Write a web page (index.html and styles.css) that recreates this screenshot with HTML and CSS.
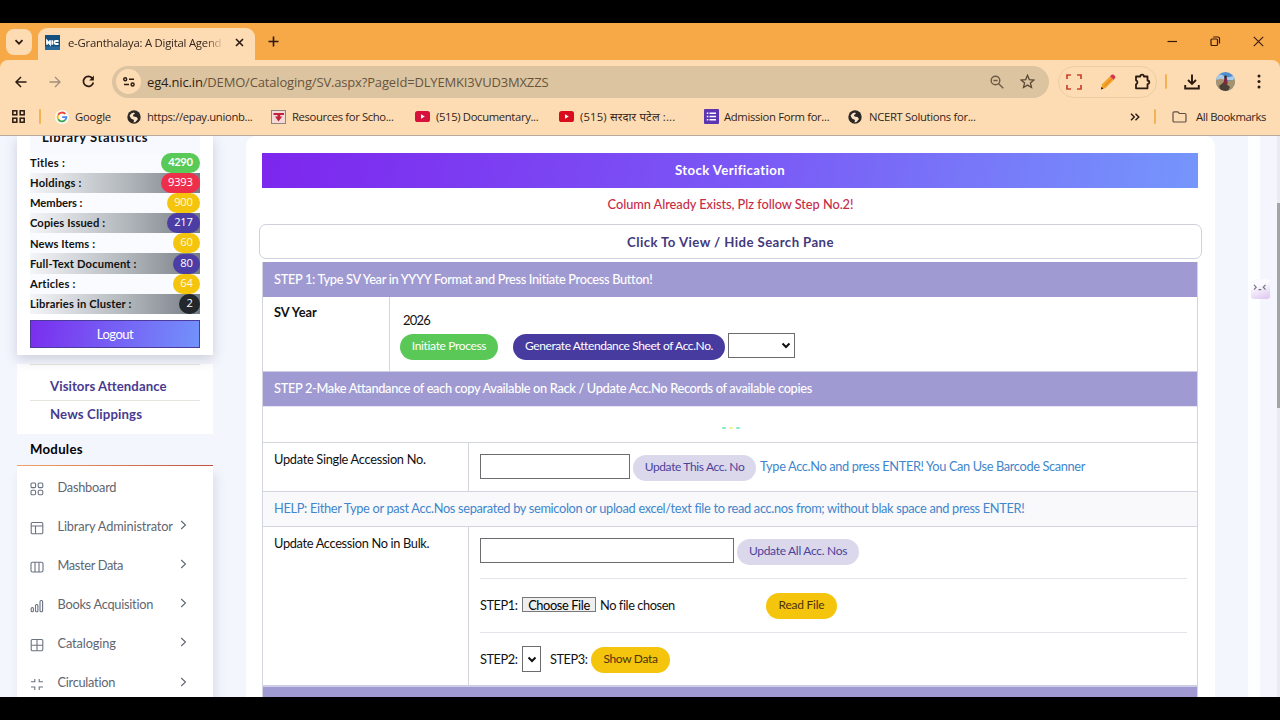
FILE: index.html
```html
<!DOCTYPE html>
<html lang="en">
<head>
<meta charset="utf-8">
<title>e-Granthalaya: A Digital Agenda</title>
<link rel="stylesheet" href="styles.css">
</head>
<body>
<div class="browser">
  <div class="tabstrip">
    <div class="tabsearch"><svg width="10" height="10" viewBox="0 0 10 10"><path d="M1.500 3.200 5 6.700 8.500 3.200" fill="none" stroke="#2b1a10" stroke-width="1.700"/></svg></div>
    <div class="tab">
      <svg width="15" height="15" viewBox="0 0 15 15"><rect width="15" height="15" fill="#14507f"/><rect y="11.500" width="15" height="3.500" fill="#2a6a9a"/><path d="M2 9.800V5.800L5 9.200V5.200M7.300 5.200v4.600M13.500 6h-2.800q-1.200 0-1.200 1.500t1.200 1.500h2.800" fill="none" stroke="#fff" stroke-width="1.800"/></svg>
      <span class="tab-title">e-Granthalaya: A Digital Agend</span>
      <svg width="9" height="9" viewBox="0 0 9 9"><path d="M1 1 8 8M8 1 1 8" stroke="#2b1a10" stroke-width="1.600"/></svg>
    </div>
    <svg class="newtab" width="11" height="11" viewBox="0 0 11 11"><path d="M5.500 .5v10M.5 5.500h10" stroke="#2b1a10" stroke-width="1.600"/></svg>
    <div class="winbtns">
      <svg width="11" height="11" viewBox="0 0 11 11"><path d="M.5 5.500h9.500" stroke="#3a1a08" stroke-width="1.200"/></svg>
      <svg width="11" height="11" viewBox="0 0 11 11"><rect x="1" y="3" width="6.500" height="6.500" rx="1" fill="none" stroke="#3a1a08" stroke-width="1.200"/><path d="M3.200 1h4.800q1.500 0 1.500 1.500v5" fill="none" stroke="#3a1a08" stroke-width="1.200"/></svg>
      <svg width="11" height="11" viewBox="0 0 11 11"><path d="M.8.8l9.400 9.400M10.200.8.8 10.200" stroke="#3a1a08" stroke-width="1.100"/></svg>
    </div>
  </div>
  <div class="toolbar">
    <div class="nav">
      <svg width="12" height="12" viewBox="0 0 12 12"><path d="M11.500 6H1.200M6 1 1 6l5 5" fill="none" stroke="#2b1a10" stroke-width="1.500"/></svg>
      <svg width="12" height="12" viewBox="0 0 12 12"><path d="M.5 6h10.300M6 1l5 5-5 5" fill="none" stroke="#a08f7c" stroke-width="1.300"/></svg>
      <svg width="13" height="13" viewBox="0 0 13 13"><path d="M11.300 7.500A5 5 0 1 1 10.500 3.500" fill="none" stroke="#2b1a10" stroke-width="1.700"/><path d="M11.900.6v4.800H7.200z" fill="#2b1a10"/></svg>
    </div>
    <div class="omnibox">
      <div class="siteinfo"><svg width="12" height="10" viewBox="0 0 12 10"><g fill="none" stroke="#2b1a10" stroke-width="1.400"><circle cx="2.200" cy="2.200" r="1.500"/><path d="M6 2.200h5M1 7.500h5"/><circle cx="9.600" cy="7.500" r="1.500"/></g></svg></div>
      <span class="url"><b>eg4.nic.in</b>/DEMO/Cataloging/SV.aspx?PageId=DLYEMKI3VUD3MXZZS</span>
      <div class="omni-icons">
        <svg width="14" height="14" viewBox="0 0 14 14"><g fill="none" stroke="#6d5a44" stroke-width="1.400"><circle cx="5.500" cy="5.500" r="4.300"/><path d="M3.400 5.500h4.200M8.700 8.700l4.600 4.600"/></g></svg>
        <svg width="15" height="15" viewBox="0 0 15 15"><path d="M7.500 1.300 9.300 5.600l4.600.4-3.500 3 1.100 4.500-4-2.400-4 2.400 1.100-4.500-3.500-3 4.600-.4z" fill="none" stroke="#5d4a36" stroke-width="1.300"/></svg>
      </div>
    </div>
    <div class="extensions">
      <svg width="16" height="16" viewBox="0 0 16 16"><path d="M1 5V1h4M11 1h4v4M15 11v4h-4M5 15H1v-4" fill="none" stroke="#c8442e" stroke-width="1.700"/></svg>
      <svg width="16" height="16" viewBox="0 0 16 16"><path d="M2 10.300 10 2.300l3.700 3.700-8 8-4.200 1.300z" fill="#f4a42c"/><path d="m4.700 11.800 7.300-7.300" stroke="#d97a14" stroke-width="1"/><path d="m10 2.300 1.700-1.500q1-.8 2 0l1.300 1.200q.8 1 0 2l-1.300 2z" fill="#d6364a"/><path d="M.8 15.400l.7-2.600 2 2z" fill="#402010"/></svg>
      <svg width="17" height="17" viewBox="0 0 17 17"><path d="M2 3.500h4.300a1.800 1.800 0 0 1 3.600 0h3.600v4a1.800 1.800 0 0 1 0 3.600v4.200H2v-4a2.100 2.100 0 0 0 0-4z" fill="none" stroke="#2b1a10" stroke-width="1.800" stroke-linejoin="round"/></svg>
    </div>
    <i class="sep"></i>
    <svg class="dl" width="16" height="16" viewBox="0 0 16 16"><path d="M8 .5v9M4 6l4 4 4-4M1.200 11v3.500h13.600V11" fill="none" stroke="#2b1a10" stroke-width="1.900"/></svg>
    <svg class="avatar" width="19" height="19" viewBox="0 0 19 19"><clipPath id="av"><circle cx="9.500" cy="9.500" r="9.500"/></clipPath><g clip-path="url(#av)"><rect width="19" height="19" fill="#4f8fd0"/><path d="M0 4q5-3 8 0t11-1v5H0z" fill="#a9cbe8"/><path d="M0 8q5-2 9 0t10-1v12H0z" fill="#a8926b"/><path d="M3 14l5-4 6 5-2 4H5z" fill="#4b4038"/><path d="M8.300 6h2.600l.8 6H7.500z" fill="#7d2740"/><circle cx="9.500" cy="5" r="1.400" fill="#40251c"/></g></svg>
    <svg class="dots" width="4" height="15" viewBox="0 0 4 15"><g fill="#2b1a10"><circle cx="2" cy="2" r="1.500"/><circle cx="2" cy="7.500" r="1.500"/><circle cx="2" cy="13" r="1.500"/></g></svg>
  </div>
  <div class="bookmarks">
    <svg class="apps" width="13" height="13" viewBox="0 0 13 13"><g fill="none" stroke="#2b1a10" stroke-width="1.500"><rect x=".8" y=".8" width="4" height="4"/><rect x="8.200" y=".8" width="4" height="4"/><rect x=".8" y="8.200" width="4" height="4"/><rect x="8.200" y="8.200" width="4" height="4"/></g></svg>
    <i class="sep sep-a"></i>
    <div class="bm bm1"><svg width="14" height="14" viewBox="0 0 14 14"><circle cx="7" cy="7" r="7" fill="#fffaf2"/><g fill="none" stroke-width="1.800"><path d="M10.300 3.900A4.400 4.400 0 0 0 3.200 4.800" stroke="#ea4335"/><path d="M3.200 4.800a4.400 4.400 0 0 0 0 4.400" stroke="#fbbc05"/><path d="M3.200 9.200a4.400 4.400 0 0 0 6.700 1.100" stroke="#34a853"/><path d="M9.900 10.300A4.400 4.400 0 0 0 11.400 7.200H7.200" stroke="#4285f4"/></g></svg><span class="k-google">Google</span></div>
    <div class="bm bm2"><svg width="14" height="14" viewBox="0 0 14 14"><circle cx="7" cy="7" r="6.700" fill="#2b2724"/><path d="M2.500 5.500q2-3 4.500-3l1 1.500-2 1 .5 1.500 3 .5 1.500 2-2.500 3-2 .5.500-2.500-3-1.500z" fill="#fbe3c4"/><path d="M6 5l4-1.500 1.500 2.500-2 .7z" fill="#2b2724"/></svg><span class="k-epay">https://epay.unionb...</span></div>
    <div class="bm bm3"><svg width="15" height="14" viewBox="0 0 15 14"><rect x=".5" y=".5" width="14" height="13" fill="#f3dcd8" stroke="#8f8580"/><path d="M2.500 3h10.500v2H9.200v1.500h2l-3.700 5L4 6.500h2.500V5h-4z" fill="#c3213c"/></svg><span class="k-res">Resources for Scho...</span></div>
    <div class="bm bm4"><svg width="15" height="11" viewBox="0 0 15 11"><rect width="15" height="11" rx="2.600" fill="#d8103c"/><path d="M6 3.200v4.600l3.800-2.300z" fill="#fff"/></svg><span class="k-doc">(515) Documentary...</span></div>
    <div class="bm bm5"><svg width="15" height="11" viewBox="0 0 15 11"><rect width="15" height="11" rx="2.600" fill="#d80c1c"/><path d="M6 3.200v4.600l3.800-2.300z" fill="#fff"/></svg><span class="k-sar">(515) सरदार पटेल :...</span></div>
    <div class="bm bm6"><svg width="15" height="15" viewBox="0 0 15 15"><rect width="15" height="15" rx="1" fill="#5d35b0"/><path d="M5.500 4.200H12M5.500 7.500H12M5.500 10.800H12M2.800 4.200h1.500M2.800 7.500h1.500M2.800 10.800h1.500" stroke="#fff" stroke-width="1.500"/></svg><span class="k-adm">Admission Form for...</span></div>
    <div class="bm bm7"><svg width="14" height="14" viewBox="0 0 14 14"><circle cx="7" cy="7" r="6.700" fill="#2b2724"/><path d="M2.500 5.500q2-3 4.500-3l1 1.500-2 1 .5 1.500 3 .5 1.500 2-2.500 3-2 .5.500-2.500-3-1.500z" fill="#fbe3c4"/><path d="M6 5l4-1.500 1.500 2.500-2 .7z" fill="#2b2724"/></svg><span class="k-ncert">NCERT Solutions for...</span></div>
    <svg class="more" width="10" height="8" viewBox="0 0 10 8"><path d="M1 .7 4.300 4 1 7.300M5.500.7 8.800 4 5.500 7.300" fill="none" stroke="#2b1a10" stroke-width="1.400"/></svg>
    <i class="sep sep-b"></i>
    <div class="bm bm8"><svg width="15" height="12" viewBox="0 0 15 12"><path d="M1 2q0-1.200 1.200-1.200h3.600l1.500 1.700h5.500q1.200 0 1.200 1.200v6q0 1.300-1.200 1.300H2.200Q1 11 1 9.700z" fill="none" stroke="#5f4f42" stroke-width="1.200"/></svg><span class="k-all">All Bookmarks</span></div>
  </div>

  <div class="page">
    <aside class="sidebar">
      <section class="stats">
        <h3 class="stats-title"><span class="k-ls">Library Statistics</span></h3>
        <div class="stat"><span class="k-s1">Titles :</span><em class="badge green strong">4290</em></div>
        <div class="stat alt"><span class="k-s2">Holdings :</span><em class="badge red">9393</em></div>
        <div class="stat"><span class="k-s3">Members :</span><em class="badge yellow">900</em></div>
        <div class="stat alt"><span class="k-s4">Copies Issued :</span><em class="badge indigo">217</em></div>
        <div class="stat"><span class="k-s5">News Items :</span><em class="badge yellow">60</em></div>
        <div class="stat alt"><span class="k-s6">Full-Text Document :</span><em class="badge indigo">80</em></div>
        <div class="stat"><span class="k-s7">Articles :</span><em class="badge yellow">64</em></div>
        <div class="stat alt"><span class="k-s8">Libraries in Cluster :</span><em class="badge dark">2</em></div>
        <button class="logout"><span class="k-lo">Logout</span></button>
      </section>
      <nav class="links">
        <a class="link"><span class="k-va">Visitors Attendance</span></a>
        <a class="link"><span class="k-nc">News Clippings</span></a>
      </nav>
      <h3 class="modules-title"><span class="k-mod">Modules</span></h3>
      <div class="rule"></div>
      <ul class="menu">
        <li><svg class="ico" viewBox="0 0 14 14"><rect x="1" y="1" width="4.600" height="4.600" rx="1.200"/><rect x="8.200" y="1" width="4.600" height="4.600" rx="1.200"/><rect x="1" y="8.200" width="4.600" height="4.600" rx="1.200"/><rect x="8.200" y="8.200" width="4.600" height="4.600" rx="1.200"/></svg><span class="k-m1">Dashboard</span></li>
        <li><svg class="ico" viewBox="0 0 14 14"><rect x="1.200" y="1.500" width="11.600" height="11.300" rx="1.200"/><path d="M1.200 5h11.600M5.500 5v7.800"/></svg><span class="k-m2">Library Administrator</span><svg class="chev" viewBox="0 0 7 10"><path d="M1.200 1 5.500 5 1.200 9"/></svg></li>
        <li><svg class="ico" viewBox="0 0 14 14"><rect x="1" y="2.200" width="12" height="9.800" rx="1.600"/><path d="M5 2.200V12M9 2.200V12"/></svg><span class="k-m3">Master Data</span><svg class="chev" viewBox="0 0 7 10"><path d="M1.200 1 5.500 5 1.200 9"/></svg></li>
        <li><svg class="ico" viewBox="0 0 14 14"><rect x="1.200" y="8.500" width="2.200" height="4.300" rx="1"/><rect x="5.500" y="5.500" width="2.400" height="7.300" rx="1"/><rect x="10" y="1.500" width="2.600" height="11.300" rx="1"/></svg><span class="k-m4">Books Acquisition</span><svg class="chev" viewBox="0 0 7 10"><path d="M1.200 1 5.500 5 1.200 9"/></svg></li>
        <li><svg class="ico" viewBox="0 0 14 14"><rect x="1.200" y="1.500" width="11.600" height="11.300" rx="1.200"/><path d="M1.200 7.200h11.600M7 1.500v11.300"/></svg><span class="k-m5">Cataloging</span><svg class="chev" viewBox="0 0 7 10"><path d="M1.200 1 5.500 5 1.200 9"/></svg></li>
        <li><svg class="ico" viewBox="0 0 14 14"><path d="M4.800 2v2.800H1M9.200 2v2.800H13M4.800 13v-3H1M9.200 13v-3H13"/></svg><span class="k-m6">Circulation</span><svg class="chev" viewBox="0 0 7 10"><path d="M1.200 1 5.500 5 1.200 9"/></svg></li>
      </ul>
    </aside>

    <main class="card">
      <h1 class="banner"><span class="k-sv">Stock Verification</span></h1>
      <p class="notice"><span class="k-col">Column Already Exists, Plz follow Step No.2!</span></p>
      <button class="searchpane"><span class="k-click">Click To View / Hide Search Pane</span></button>
      <div class="grid">
        <div class="head head1"><span class="k-st1">STEP 1: Type SV Year in YYYY Format and Press Initiate Process Button!</span></div>
        <div class="row year">
          <div class="label"><span class="k-svy">SV Year</span></div>
          <div class="value">
            <div class="yearvalue"><span class="k-2026">2026</span></div>
            <div class="line">
              <button class="pill p-init"><span class="k-init">Initiate Process</span></button>
              <button class="pill p-gen"><span class="k-gen">Generate Attendance Sheet of Acc.No.</span></button>
              <div class="select sel-sheet"><svg width="10" height="7" viewBox="0 0 10 7"><path d="M1.500 1.500 5 5l3.500-3.500" fill="none" stroke="#111" stroke-width="2"/></svg></div>
            </div>
          </div>
        </div>
        <div class="head head2"><span class="k-st2">STEP 2-Make Attandance of each copy Available on Rack / Update Acc.No Records of available copies</span></div>
        <div class="loading"><i class="c1"></i><i class="c2"></i><i class="c1"></i></div>
        <div class="row single">
          <div class="label"><span class="k-us">Update Single Accession No.</span></div>
          <div class="value line">
            <div class="input in-one"></div>
            <button class="pill p-this"><span class="k-this">Update This Acc. No</span></button>
            <span class="hint k-type">Type Acc.No and press ENTER! You Can Use Barcode Scanner</span>
          </div>
        </div>
        <div class="help"><span class="k-help">HELP: Either Type or past Acc.Nos separated by semicolon or upload excel/text file to read acc.nos from; without blak space and press ENTER!</span></div>
        <div class="row bulk">
          <div class="label"><span class="k-ub">Update Accession No in Bulk.</span></div>
          <div class="value">
            <div class="line l1"><div class="input in-all"></div><button class="pill p-all"><span class="k-uall">Update All Acc. Nos</span></button></div>
            <div class="line l2"><span class="k-step">STEP1:</span><button class="choose"><span class="k-choose">Choose File</span></button><span class="nofile k-nofile">No file chosen</span><button class="pill p-read"><span class="k-read">Read File</span></button></div>
            <div class="line l3"><span class="k-step">STEP2:</span><div class="select sel-small"><svg width="10" height="7" viewBox="0 0 10 7"><path d="M1.500 1.500 5 5l3.500-3.500" fill="none" stroke="#111" stroke-width="2"/></svg></div><span class="step3 k-step">STEP3:</span><button class="pill p-show"><span class="k-show">Show Data</span></button></div>
          </div>
        </div>
        <div class="head head3"></div>
      </div>
    </main>
    <div class="rail"><div class="rail-main"></div><div class="rail-side"></div>
      <div class="widget"><svg width="16" height="7" viewBox="0 0 16 7"><path d="M2 .8 4.200 3.200 2 5.600M13.500.8l-2.200 2.400 2.200 2.400M6.500 5.600h2.800" fill="none" stroke="#77757f" stroke-width="1.200"/></svg></div>
    </div>
    <div class="scrollbar"><div class="thumb"></div></div>
  </div>
</div>
</body>
</html>
```
FILE: styles.css
```css
* { box-sizing: border-box; }
body { margin: 0; background: #000; font-family: Lato, "Noto Sans", sans-serif; font-size: 12.8px; color: #111; overflow: hidden; }
button { font: inherit; padding: 0; margin: 0; border: 0; }
h1, h3, p, ul { margin: 0; padding: 0; font-size: inherit; }
svg { display: block; flex: none; }
span { white-space: nowrap; }
.browser { margin-top: 23px; width: 1280px; height: 674px; display: flex; flex-direction: column; overflow: hidden; background: #f7a947; }

/* Browser chrome */
.tabstrip, .toolbar, .bookmarks { font-family: "Open Sans", "Noto Sans", sans-serif; color: #33251a; }
.tabstrip { height: 37px; flex: none; display: flex; }
.tabsearch { width: 26px; height: 26px; margin: 6px 0 0 6px; border-radius: 8px; background: #fddcb4; display: flex; align-items: center; justify-content: center; }
.tab { width: 217px; height: 32px; margin: 5px 0 0 6px; padding: 0 10px 4px 7px; border-radius: 9px 9px 0 0; background: #fddcb4; display: flex; align-items: center; font-size: 11.3px; }
.tab-title { width: 156px; margin: 0 11px 0 8px; letter-spacing: -.22px; overflow: hidden; -webkit-mask-image: linear-gradient(90deg, #000 88%, transparent); mask-image: linear-gradient(90deg, #000 88%, transparent); }
.newtab { margin: 13px 0 0 13px; }
.winbtns { margin: 13px 16px 0 auto; display: flex; gap: 32px; }
.toolbar { height: 43px; flex: none; border-radius: 8px 8px 0 0; background: #fddcb4; display: flex; align-items: center; }
.nav { display: flex; align-items: center; gap: 21.5px; margin-left: 15px; width: 97px; }
.omnibox { width: 937px; height: 32px; border-radius: 16px; background: #ddc4a0; display: flex; align-items: center; padding-left: 4px; font-size: 13px; color: #66543f; }
.siteinfo { width: 25px; height: 25px; border-radius: 50%; background: #fddcb4; display: flex; align-items: center; justify-content: center; margin-right: 6px; }
.url { letter-spacing: -.165px; }
.url b { font-weight: 400; color: #2b1f14; }
.omni-icons { margin: 0 14px 0 auto; display: flex; align-items: center; gap: 16px; }
.extensions { width: 99px; height: 32px; margin-left: 9px; border: 1px solid #eccda2; border-radius: 16px; display: flex; align-items: center; gap: 18px; padding-left: 7px; }
.sep { width: 2px; height: 15px; background: #f4b254; border-radius: 1px; }
.toolbar .sep { margin-left: 8px; }
.dl { margin-left: 17px; }
.avatar { margin-left: 16px; }
.dots { margin-left: 22px; }
.bookmarks { height: 33px; flex: none; background: #fddcb4; border-bottom: 1px solid #b9aaa0; display: flex; align-items: center; font-size: 11.3px; padding-bottom: 5px; }
.apps { margin-left: 12px; }
.sep-a { margin: 0 14px 0 14px; }
.bm { display: flex; align-items: center; flex: none; }
.bm span { margin-top: -1px; }
.bm1 { width: 72px; gap: 6px; }
.bm2 { width: 144px; gap: 6px; }
.bm3 { width: 144px; gap: 6px; }
.bm4 { width: 144px; gap: 6px; }
.bm5 { width: 145px; gap: 6px; }
.bm6 { width: 144px; gap: 5px; }
.bm7 { width: 282px; gap: 7px; }
.sep-b { margin: 0 16px 0 14px; }
.bm8 { gap: 9px; }
.k-google { letter-spacing: -.2px; }
.k-epay { letter-spacing: -.34px; }
.k-res { letter-spacing: -.38px; }
.k-doc { letter-spacing: -.36px; }
.k-sar { letter-spacing: .16px; }
.k-adm { letter-spacing: -.34px; }
.k-ncert { letter-spacing: -.33px; }
.k-all { letter-spacing: -.4px; }

/* Sidebar */
.page { height: 561px; flex: none; display: flex; background: #f4f6fe; overflow: hidden; }
.sidebar { width: 196px; margin-left: 17px; flex: none; }
.stats { height: 219px; background: #fff; padding: 0 13px; box-shadow: 0 4px 12px rgba(60, 60, 80, .22); position: relative; }
.stats-title { height: 16.5px; padding-left: 12px; line-height: 20px; font-size: 13px; font-weight: 700; background: #f8f9fe; overflow: hidden; }
.stats-title span { display: block; margin-top: -9px; }
.stat { height: 20.2px; display: flex; align-items: center; justify-content: space-between; font-size: 11.2px; font-weight: 700; background: #fafbff; line-height: 19.4px; }
.stat.alt { background: linear-gradient(90deg, #f4f5f8, #b4b9be 55%, #767d84); }
.badge { height: 20px; padding: 0 7.5px; border-radius: 10px; font-family: "Open Sans", sans-serif; font-style: normal; font-weight: 400; font-size: 11.2px; letter-spacing: -.3px; line-height: 18.5px; color: #fff; }
.badge.strong { font-family: Lato, sans-serif; font-weight: 700; letter-spacing: -.4px; }
.green { background: #59c958; }
.red { background: #ee2f4c; }
.yellow { background: #f5c40c; color: #fffbe0; }
.indigo { background: #4b3da3; }
.dark { background: #23282d; }
.logout { display: block; width: 170px; height: 28px; margin-top: 6px; border: 1px solid #4a3b9c; background: linear-gradient(100deg, #7a2eee, #7292fb); color: #fff; font-size: 13px; }
.links { height: 70px; margin-top: 9px; padding: 0 13px; background: #fff; }
.link { display: block; padding-left: 20px; border-top: 1px solid #e6e4dc; font-size: 13.2px; font-weight: 700; color: #483b8f; height: 36px; line-height: 43px; }
.link + .link { line-height: 27px; }
.modules-title { height: 31px; padding-left: 13px; line-height: 30px; font-size: 13.2px; color: #000; }
.rule { height: 1px; background: linear-gradient(90deg, #f2a468, #c0503f); position: relative; z-index: 1; }
.menu { list-style: none; background: #fff; height: 240px; box-shadow: 3px 8px 10px rgba(60, 60, 80, .13); color: #5f6670; }
.menu li { height: 39.1px; padding: 2px 26px 0 13px; display: flex; align-items: center; }
.ico { width: 14px; height: 14px; margin: 4px 13.5px 0 0; fill: none; stroke: #6b7280; stroke-width: 1.1; }
.chev { width: 7px; height: 10px; margin: -1px 0 0 auto; fill: none; stroke: #5f6670; stroke-width: 1.1; }
.k-ls { letter-spacing: .59px; }
.k-s1 { letter-spacing: .29px; }
.k-s2 { letter-spacing: .21px; }
.k-s3 { letter-spacing: -.03px; }
.k-s4, .k-s5 { letter-spacing: .09px; }
.k-s6 { letter-spacing: .17px; }
.k-s7 { letter-spacing: .19px; }
.k-s8 { letter-spacing: .15px; }
.k-lo { letter-spacing: -.5px; }
.k-va { letter-spacing: .06px; }
.k-nc { letter-spacing: .13px; }
.k-mod { letter-spacing: .27px; }
.k-m1 { letter-spacing: -.25px; }
.k-m2 { letter-spacing: -.15px; }
.k-m3 { letter-spacing: -.34px; }
.k-m4 { letter-spacing: -.27px; }
.k-m5 { letter-spacing: -.12px; }
.k-m6 { letter-spacing: -.28px; }

/* Main card */
.card { width: 969px; margin-left: 33px; flex: none; background: #fff; border-radius: 10px 10px 0 0; padding: 17px 13px 0 13px; }
.banner { width: 936px; height: 35px; margin-left: 3px; background: linear-gradient(100deg, #7d26ee, #7a5cf6 55%, #7596fc); color: #fff; text-align: center; line-height: 34px; font-size: 13.2px; }
.notice { width: 943px; height: 36px; line-height: 32px; text-align: center; color: #c72c48; font-weight: 500; }
.searchpane { display: block; width: 943px; height: 35px; border: 1px solid #cfd1dc; border-radius: 7px; background: #fff; color: #43397c; font-weight: 700; font-size: 13.2px; }
.grid { width: 936px; margin: 3px 0 0 3px; border: 1px solid #d3d5de; border-top: 0; display: flex; flex-direction: column; }
.head { background: #a09ad2; color: #fff; padding-left: 11px; flex: none; font-weight: 500; }
.head1 { height: 35px; line-height: 34px; }
.head2 { height: 35px; line-height: 33px; border-top: 1px solid #cfcde6; }
.head3 { height: 34px; border-top: 2px solid #cfcde6; }
.row { display: flex; }
.label { padding: 0 0 0 11px; border-right: 1px solid #d3d5de; flex: none; }
.year { height: 74px; }
.year .label { width: 127px; line-height: 31px; font-weight: 700; }
.year .value { padding: 14px 0 0 10px; }
.yearvalue { height: 23px; padding-left: 3px; line-height: 19px; font-size: 13px; }
.line { display: flex; align-items: center; }
.pill { height: 26px; border-radius: 13px; font-size: 12px; line-height: 23px; padding-bottom: 3px; text-align: center; flex: none; }
.p-init { width: 98px; background: #5ac857; color: #fff; }
.p-gen { width: 212px; margin-left: 15px; background: #483ba0; color: #fff; }
.select { border: 1px solid #6b6b70; background: #fff; display: flex; align-items: center; justify-content: flex-end; }
.sel-sheet { width: 67px; height: 25px; margin: -3px 0 0 3px; padding-right: 3px; }
.loading { height: 37px; border-bottom: 1px solid #d3d5de; border-top: 1px solid #e6e6f2; display: flex; justify-content: center; align-items: center; gap: 3px; padding: 7px 0 0 1px; }
.loading i { width: 4px; height: 2px; border-radius: 1px; background: #82ecc4; }
.loading .c2 { background: #f6f19b; }
.single { height: 49px; border-bottom: 1px solid #d3d5de; }
.single .label, .bulk .label { width: 206px; line-height: 32px; }
.single .value { padding: 0 0 1px 11px; }
.input { height: 25px; border: 1px solid #6b6b70; background: #fff; flex: none; }
.in-one { width: 150px; }
.p-this { width: 123px; margin: 2px 4px 0 3px; background: #dbd8ec; color: #4c429a; }
.hint { color: #3f86cc; margin-top: -1px; }
.help { height: 35px; line-height: 32px; padding-left: 11px; border-bottom: 1px solid #d3d5de; background: #f9f9fc; color: #3f86cc; }
.bulk { height: 158px; }
.bulk .value { flex: 1; padding: 0 10px 0 11px; }
.l1 { height: 52px; border-bottom: 1px solid #e4e4ea; padding-bottom: 4px; }
.in-all { width: 254px; }
.p-all { width: 122px; margin: 2px 0 0 3px; background: #dbd8ec; color: #4c429a; }
.l2 { height: 54px; border-bottom: 1px solid #e4e4ea; padding-bottom: 2px; }
.choose { width: 74px; height: 15px; margin-left: 4px; border: 1px solid #77777c; background: #efefef; line-height: 12px; }
.nofile { width: 75px; margin-left: 4px; }
.p-read { width: 71px; margin: 3px 0 0 91px; background: #f5c40c; color: #4c3310; }
.l3 { height: 52px; }
.l2 > .k-step, .l3 > .k-step { width: 38px; }
.sel-small { width: 19px; height: 26px; margin-left: 4px; justify-content: center; }
.step3 { margin-left: 9px; }
.p-show { width: 79px; margin: 2px 0 0 3px; background: #f5c40c; color: #4c3310; }
.k-sv { letter-spacing: .39px; }
.k-col { letter-spacing: -.06px; }
.k-click { letter-spacing: .42px; }
.k-st1 { letter-spacing: -.333px; }
.k-2026 { letter-spacing: -.75px; }
.k-init { letter-spacing: -.35px; }
.k-gen { letter-spacing: -.4px; }
.k-st2 { letter-spacing: -.33px; }
.k-us { letter-spacing: -.3px; }
.k-this { letter-spacing: -.37px; }
.k-type { letter-spacing: -.36px; }
.k-help { letter-spacing: -.325px; }
.k-ub { letter-spacing: -.33px; }
.k-uall { letter-spacing: -.3px; }
.k-step { letter-spacing: -.44px; }
.k-choose { letter-spacing: -.38px; }
.k-nofile { letter-spacing: -.42px; }
.k-read { letter-spacing: -.25px; }
.k-show { letter-spacing: -.34px; }

/* Right edge */
.rail { width: 29px; margin-left: 33px; display: flex; position: relative; flex: none; }
.rail-main { width: 12px; background: #fdfeff; }
.rail-side { width: 17px; background: #f5f5fd; }
.widget { position: absolute; left: 3px; top: 143px; width: 19px; height: 20px; border-radius: 3px; padding: 5px 0 0 1px; background: linear-gradient(160deg, #fbfaff 35%, #dcc4ee); }
.scrollbar { width: 3px; background: #e9ebf0; padding-top: 67px; flex: none; }
.thumb { height: 205px; background: #a2a4a6; }
```
